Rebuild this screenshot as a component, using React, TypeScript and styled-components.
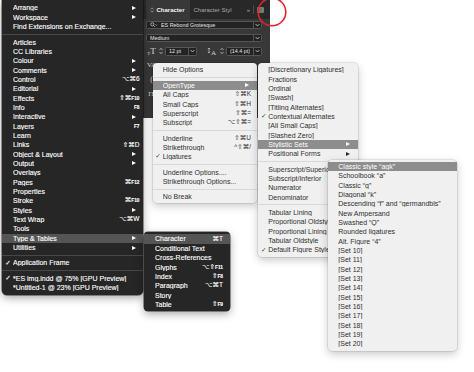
import React from "react";
import styled, { createGlobalStyle, css } from "styled-components";

const GlobalStyle = createGlobalStyle`
  html, body {
    margin: 0;
    padding: 0;
    background: #ffffff;
  }
  body {
    font-family: "Liberation Sans", "DejaVu Sans", sans-serif;
  }
`;

type Tone = "dark" | "light";

type Entry =
  | "sep"
  | {
      label: string;
      keys?: string;
      fkey?: string;
      arrow?: boolean;
      check?: boolean;
      active?: boolean;
    };

const ROW = 9.35;

const mainItems: Entry[] = [
  { label: "Arrange", arrow: true },
  { label: "Workspace", arrow: true },
  { label: "Find Extensions on Exchange..." },
  "sep",
  { label: "Articles" },
  { label: "CC Libraries" },
  { label: "Colour", arrow: true },
  { label: "Comments", arrow: true },
  { label: "Control", keys: "⌥⌘6" },
  { label: "Editorial", arrow: true },
  { label: "Effects", keys: "⇧⌘", fkey: "F10" },
  { label: "Info", fkey: "F8" },
  { label: "Interactive", arrow: true },
  { label: "Layers", fkey: "F7" },
  { label: "Learn" },
  { label: "Links", keys: "⇧⌘D" },
  { label: "Object & Layout", arrow: true },
  { label: "Output", arrow: true },
  { label: "Overlays" },
  { label: "Pages", keys: "⌘", fkey: "F12" },
  { label: "Properties" },
  { label: "Stroke", keys: "⌘", fkey: "F10" },
  { label: "Styles", arrow: true },
  { label: "Text Wrap", keys: "⌥⌘W" },
  { label: "Tools" },
  { label: "Type & Tables", arrow: true, active: true },
  { label: "Utilities", arrow: true },
  "sep",
  { label: "Application Frame", check: true },
  "sep",
  { label: "*ES img.indd @ 75% [GPU Preview]", check: true },
  { label: "*Untitled-1 @ 23% [GPU Preview]" },
];

const typeItems: Entry[] = [
  { label: "Character", keys: "⌘T", active: true },
  { label: "Conditional Text" },
  { label: "Cross-References" },
  { label: "Glyphs", keys: "⌥⇧", fkey: "F11" },
  { label: "Index", keys: "⇧", fkey: "F8" },
  { label: "Paragraph", keys: "⌥⌘T" },
  { label: "Story" },
  { label: "Table", keys: "⇧", fkey: "F9" },
];

const contextItems: Entry[] = [
  { label: "Hide Options" },
  "sep",
  { label: "OpenType", arrow: true, active: true },
  { label: "All Caps", keys: "⇧⌘K" },
  { label: "Small Caps", keys: "⇧⌘H" },
  { label: "Superscript", keys: "⇧⌘=" },
  { label: "Subscript", keys: "⌥⇧⌘=" },
  "sep",
  { label: "Underline", keys: "⇧⌘U" },
  { label: "Strikethrough", keys: "^⇧⌘/" },
  { label: "Ligatures", check: true },
  "sep",
  { label: "Underline Options...." },
  { label: "Strikethrough Options..." },
  "sep",
  { label: "No Break" },
];

const openTypeItems: Entry[] = [
  { label: "[Discretionary Ligatures]" },
  { label: "Fractions" },
  { label: "Ordinal" },
  { label: "[Swash]" },
  { label: "[Titling Alternates]" },
  { label: "Contextual Alternates", check: true },
  { label: "[All Small Caps]" },
  { label: "[Slashed Zero]" },
  { label: "Stylistic Sets", arrow: true, active: true },
  { label: "Positional Forms", arrow: true },
  "sep",
  { label: "Superscript/Superior" },
  { label: "Subscript/Inferior" },
  { label: "Numerator" },
  { label: "Denominator" },
  "sep",
  { label: "Tabular Lining" },
  { label: "Proportional Oldstyle" },
  { label: "Proportional Lining" },
  { label: "Tabular Oldstyle" },
  { label: "Default Figure Style", check: true },
];

const stylisticItems: Entry[] = [
  { label: "Classic style “agk”", active: true },
  { label: "Schoolbook “a”" },
  { label: "Classic “g”" },
  { label: "Diagonal “k”" },
  { label: "Descending “f” and “germandbls”" },
  { label: "New Ampersand" },
  { label: "Swashed “Q”" },
  { label: "Rounded ligatures" },
  { label: "Alt. Figure “4”" },
  ...Array.from({ length: 11 }, (_, i) => ({ label: `[Set ${i + 10}]` })),
];

const Stage = styled.div`
  position: relative;
  width: 474px;
  height: 372px;
  overflow: hidden;
  background: #ffffff;
`;

const Desk = styled.div`
  display: flex;
  align-items: flex-start;
  padding-left: 2px;
`;

const Menu = styled.div<{ $tone: Tone }>`
  box-sizing: border-box;
  font-family: "Liberation Sans", "DejaVu Sans", sans-serif;
  font-size: 7px;
  line-height: 1;
  ${({ $tone }) =>
    $tone === "dark"
      ? css`
          background: #262626;
          color: #ffffff;
          -webkit-text-stroke: 0.12px #ffffff;
          box-shadow: 0 0 0 0.5px rgba(0, 0, 0, 0.7), 0 3px 8px rgba(0, 0, 0, 0.35);
        `
      : css`
          background: #f0f0f0;
          color: #2f2f2f;
          box-shadow: 0 0 0 0.5px rgba(0, 0, 0, 0.16), 0 3px 9px rgba(0, 0, 0, 0.22);
        `}
`;

const MainMenu = styled(Menu)`
  position: relative;
  z-index: 2;
  flex: none;
  width: 141px;
  padding: 3.3px 0 2.5px;
  border-radius: 0 0 5px 5px;
`;

const Floating = styled(Menu)`
  position: absolute;
  padding: 2px 0;
  border-radius: 4px;
`;

const TypeMenu = styled(Floating)`
  left: 144px;
  top: 232.3px;
  width: 86px;
  z-index: 3;
`;

const ContextMenu = styled(Floating)`
  left: 152.5px;
  top: 63.3px;
  width: 104px;
  z-index: 3;
`;

const OpenTypeMenu = styled(Floating)`
  left: 258px;
  top: 63px;
  width: 100px;
  z-index: 4;
  overflow: hidden;
`;

const StylisticMenu = styled(Floating)`
  left: 327.7px;
  top: 159.7px;
  width: 129px;
  z-index: 5;
`;

const Row = styled.div<{ $tone: Tone; $active?: boolean; $inset: number }>`
  display: flex;
  align-items: center;
  height: ${ROW}px;
  padding-right: ${({ $inset }) => $inset}px;
  white-space: nowrap;
  ${({ $active, $tone }) =>
    $active &&
    css`
      background: ${$tone === "dark" ? "#555555" : "#8d8d8d"};
      color: #ffffff;
    `}
`;

const Check = styled.span<{ $gutter: number }>`
  flex: none;
  width: ${({ $gutter }) => $gutter}px;
  padding-left: 1px;
  box-sizing: border-box;
  text-align: center;
  font-size: 6.5px;
`;

const Label = styled.span`
  flex: 1;
  overflow: hidden;
`;

const Keys = styled.span`
  flex: none;
  font-size: 6.5px;
`;

const FKey = styled.span`
  font-size: 4.8px;
  font-weight: bold;
`;

const Arrow = styled.span<{ $gap: number }>`
  flex: none;
  width: 0;
  height: 0;
  margin-right: ${({ $gap }) => $gap}px;
  border-left: 4px solid currentColor;
  border-top: 2.4px solid transparent;
  border-bottom: 2.4px solid transparent;
`;

const Separator = styled.div<{ $tone: Tone }>`
  height: 1px;
  margin: 2.5px 0;
  background: ${({ $tone }) => ($tone === "dark" ? "#474747" : "#d9d9d9")};
`;

const MenuList: React.FC<{
  items: Entry[];
  tone: Tone;
  gutter: number;
  inset: number;
  arrowGap: number;
}> = ({ items, tone, gutter, inset, arrowGap }) => (
  <>
    {items.map((item, i) =>
      item === "sep" ? (
        <Separator key={i} $tone={tone} />
      ) : (
        <Row key={i} $tone={tone} $active={item.active} $inset={inset}>
          <Check $gutter={gutter}>{item.check ? "✓" : ""}</Check>
          <Label>{item.label}</Label>
          {(item.keys || item.fkey) && (
            <Keys>
              {item.keys}
              {item.fkey && <FKey>{item.fkey}</FKey>}
            </Keys>
          )}
          {item.arrow && <Arrow $gap={arrowGap} />}
        </Row>
      )
    )}
  </>
);

/* ---------- Character panel ---------- */

const Panel = styled.div`
  position: relative;
  z-index: 1;
  flex: none;
  width: 127px;
  height: 118px;
  background: #383838;
  display: flex;
  flex-direction: column;
  font-family: "Liberation Sans", "DejaVu Sans", sans-serif;
  color: #e8e8e8;
`;

const TabBar = styled.div`
  display: flex;
  align-items: stretch;
  height: 19px;
  background: #282828;
  padding-left: 3px;
`;

const Tab = styled.div<{ $active?: boolean }>`
  display: flex;
  align-items: center;
  gap: 2.5px;
  padding: 0 5px 0 4px;
  font-size: 6px;
  ${({ $active }) =>
    $active
      ? css`
          background: #383838;
          color: #f4f4f4;
          font-weight: bold;
        `
      : css`
          color: #a8a8a8;
        `}
`;

const TabTail = styled.div`
  flex: 1;
  display: flex;
  align-items: center;
  justify-content: flex-end;
  gap: 3px;
  padding-right: 6px;
  color: #a8a8a8;
  font-size: 6px;
`;

const TabDivider = styled.span`
  width: 1px;
  height: 9px;
  background: #4a4a4a;
`;

const PanelBody = styled.div`
  display: flex;
  flex-direction: column;
  gap: 4.6px;
  padding: 2px 8px 0 3px;
`;

const Field = styled.div<{ $width?: number }>`
  display: flex;
  align-items: center;
  gap: 3px;
  box-sizing: border-box;
  height: 9px;
  ${({ $width }) => ($width ? `width: ${$width}px;` : "flex: 1;")}
  background: #232323;
  border: 0.5px solid #555555;
  border-radius: 1.5px;
  padding: 0 0 0 3px;
  font-size: 5.4px;
  color: #e6e6e6;
`;

const FieldText = styled.span`
  flex: 1;
  white-space: nowrap;
  overflow: hidden;
`;

const Drop = styled.span`
  flex: none;
  display: flex;
  align-items: center;
  justify-content: center;
  width: 7px;
  height: 100%;
  border-left: 0.5px solid #555555;
`;

const ToolRow = styled.div`
  display: flex;
  align-items: center;
  gap: 2px;
  height: 10px;
`;

const ToolIcon = styled.span`
  flex: none;
  width: 11px;
  display: flex;
  align-items: flex-end;
  justify-content: center;
  color: #d8d8d8;
  font-family: "Liberation Serif", serif;
  line-height: 1;
`;

const Spacer = styled.span`
  width: 6px;
`;

const Chevron: React.FC = () => (
  <svg width="5" height="4" viewBox="0 0 5 4">
    <path d="M0.6 1 L2.5 3 L4.4 1" fill="none" stroke="#d0d0d0" strokeWidth="0.8" />
  </svg>
);

const Stepper: React.FC = () => (
  <svg width="4" height="8" viewBox="0 0 4 8" style={{ flex: "none" }}>
    <path d="M0.5 3 L2 1.3 L3.5 3 M0.5 5 L2 6.7 L3.5 5" fill="none" stroke="#cfcfcf" strokeWidth="0.7" />
  </svg>
);

const Grip: React.FC = () => (
  <svg width="4" height="6" viewBox="0 0 4 6">
    <path d="M0.5 2.3 L2 0.8 L3.5 2.3 M0.5 3.7 L2 5.2 L3.5 3.7" fill="none" stroke="#bdbdbd" strokeWidth="0.7" />
  </svg>
);

const SearchGlyph: React.FC = () => (
  <svg width="8" height="6" viewBox="0 0 8 6" style={{ flex: "none" }}>
    <circle cx="2.3" cy="2.3" r="1.6" fill="none" stroke="#d8d8d8" strokeWidth="0.7" />
    <path d="M3.4 3.4 L4.8 4.8" stroke="#d8d8d8" strokeWidth="0.8" />
    <path d="M5.5 2.5 L6.4 3.4 L7.3 2.5" fill="none" stroke="#d8d8d8" strokeWidth="0.6" />
  </svg>
);

const MenuGlyph: React.FC = () => (
  <svg width="7" height="6" viewBox="0 0 7 6">
    <rect x="0.3" y="0.3" width="6.4" height="5.4" fill="#8fa38e" />
    <path d="M1.3 1.8 H5.7 M1.3 3 H5.7 M1.3 4.2 H5.7" stroke="#3a3a3a" strokeWidth="0.6" />
  </svg>
);

const LeadingIcon: React.FC = () => (
  <svg width="10" height="9" viewBox="0 0 10 9">
    <path d="M2 1 V6 M0.8 2.2 L2 1 L3.2 2.2 M0.8 4.8 L2 6 L3.2 4.8" fill="none" stroke="#d8d8d8" strokeWidth="0.6" />
    <text x="4" y="8" fontSize="7" fill="#d8d8d8" fontFamily="Liberation Serif, serif">A</text>
  </svg>
);

const Highlight = styled.svg`
  position: absolute;
  left: 257px;
  top: -3px;
  z-index: 6;
  overflow: visible;
`;

const CharacterPanel: React.FC = () => (
  <Panel>
    <TabBar>
      <Tab $active>
        <Grip />
        Character
      </Tab>
      <Tab>Character Styl</Tab>
      <TabTail>
        <span>»</span>
        <TabDivider />
        <MenuGlyph />
      </TabTail>
    </TabBar>
    <PanelBody>
      <Field>
        <SearchGlyph />
        <FieldText>ES Rebond Grotesque</FieldText>
        <Drop>
          <Chevron />
        </Drop>
      </Field>
      <Field>
        <FieldText>Medium</FieldText>
        <Drop>
          <Chevron />
        </Drop>
      </Field>
      <ToolRow>
        <ToolIcon>
          <span style={{ fontSize: 5 }}>T</span>
          <span style={{ fontSize: 9 }}>T</span>
        </ToolIcon>
        <Stepper />
        <Field $width={33}>
          <FieldText>12 pt</FieldText>
          <Drop>
            <Chevron />
          </Drop>
        </Field>
        <Spacer />
        <ToolIcon>
          <LeadingIcon />
        </ToolIcon>
        <Stepper />
        <Field>
          <FieldText>(14.4 pt)</FieldText>
          <Drop>
            <Chevron />
          </Drop>
        </Field>
      </ToolRow>
      <ToolRow>
        <ToolIcon style={{ fontSize: 7 }}>VA</ToolIcon>
      </ToolRow>
      <ToolRow>
        <ToolIcon style={{ fontSize: 8 }}>(</ToolIcon>
      </ToolRow>
      <ToolRow>
        <ToolIcon style={{ fontSize: 7 }}>IT</ToolIcon>
      </ToolRow>
    </PanelBody>
  </Panel>
);

export default function App() {
  return (
    <Stage>
      <GlobalStyle />
      <Desk>
        <MainMenu $tone="dark">
          <MenuList items={mainItems} tone="dark" gutter={11} inset={3.5} arrowGap={4} />
        </MainMenu>
        <CharacterPanel />
      </Desk>
      <ContextMenu $tone="light">
        <MenuList items={contextItems} tone="light" gutter={10.2} inset={5.5} arrowGap={2} />
      </ContextMenu>
      <TypeMenu $tone="dark">
        <MenuList items={typeItems} tone="dark" gutter={11} inset={7} arrowGap={0} />
      </TypeMenu>
      <OpenTypeMenu $tone="light">
        <MenuList items={openTypeItems} tone="light" gutter={10.3} inset={6} arrowGap={2} />
      </OpenTypeMenu>
      <StylisticMenu $tone="light">
        <MenuList items={stylisticItems} tone="light" gutter={10.6} inset={6} arrowGap={0} />
      </StylisticMenu>
      <Highlight width="30" height="30" viewBox="0 0 30 30">
        <ellipse cx="15" cy="15" rx="13.8" ry="13.8" fill="none" stroke="#e3232c" strokeWidth="1.6" />
      </Highlight>
    </Stage>
  );
}
